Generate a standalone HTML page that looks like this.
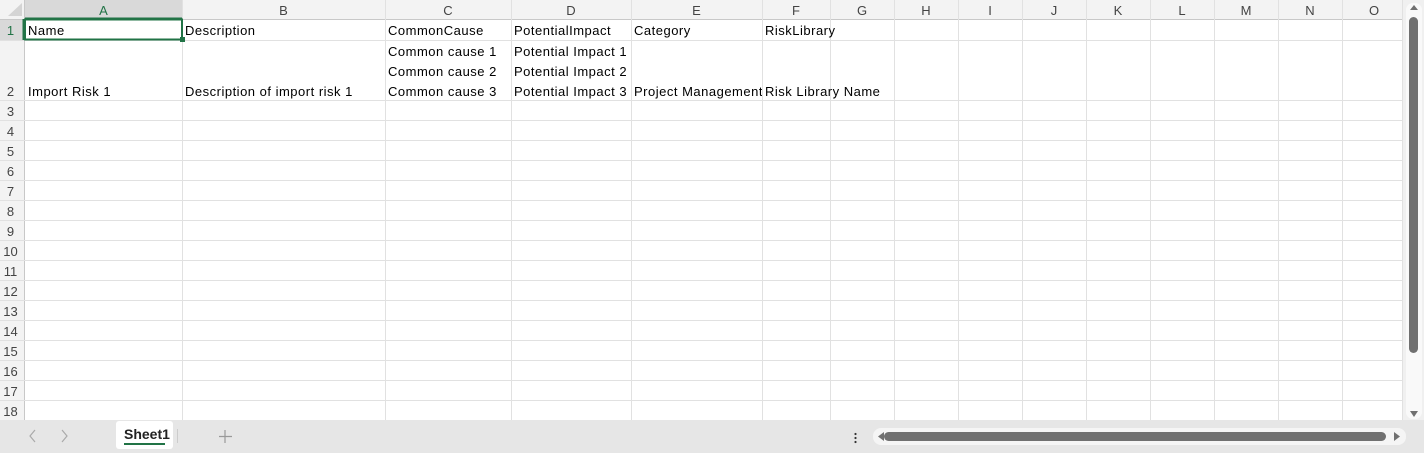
<!DOCTYPE html>
<html><head><meta charset="utf-8"><style>
body{margin:0;width:1424px;height:453px;overflow:hidden;background:#fff;font-family:"Liberation Sans",sans-serif;position:relative}
.t{position:absolute;font-size:13px;color:#000;white-space:nowrap;line-height:20px;letter-spacing:0.5px;margin-top:1px}
.h{position:absolute;font-size:13px;color:#444;text-align:center;line-height:19px;top:1px}
.r{position:absolute;left:0;width:21px;text-align:center;font-size:13px;color:#444;line-height:20px;margin-top:1px}
</style></head><body>
<svg width="1424" height="453" style="position:absolute;left:0;top:0">
<rect x="0" y="0" width="1404" height="19" fill="#f3f3f3"/>
<rect x="0" y="0" width="25" height="420" fill="#f3f3f3"/>
<rect x="25" y="0" width="157" height="19" fill="#d9d9d9"/>
<rect x="0" y="19" width="25" height="21" fill="#d9d9d9"/>
<polygon points="8,16 22,16 22,3" fill="#d4d4d4"/>
<g stroke="#e1e1e1" stroke-width="1">
<line x1="0" y1="19.5" x2="1404" y2="19.5" stroke="#c8c8c8"/>
<line x1="24.5" y1="0" x2="24.5" y2="420" stroke="#c8c8c8"/>
<line x1="0" y1="40.5" x2="1404" y2="40.5"/>
<line x1="0" y1="100.5" x2="1404" y2="100.5"/>
<line x1="0" y1="120.5" x2="1404" y2="120.5"/><line x1="0" y1="140.5" x2="1404" y2="140.5"/><line x1="0" y1="160.5" x2="1404" y2="160.5"/><line x1="0" y1="180.5" x2="1404" y2="180.5"/><line x1="0" y1="200.5" x2="1404" y2="200.5"/><line x1="0" y1="220.5" x2="1404" y2="220.5"/><line x1="0" y1="240.5" x2="1404" y2="240.5"/><line x1="0" y1="260.5" x2="1404" y2="260.5"/><line x1="0" y1="280.5" x2="1404" y2="280.5"/><line x1="0" y1="300.5" x2="1404" y2="300.5"/><line x1="0" y1="320.5" x2="1404" y2="320.5"/><line x1="0" y1="340.5" x2="1404" y2="340.5"/><line x1="0" y1="360.5" x2="1404" y2="360.5"/><line x1="0" y1="380.5" x2="1404" y2="380.5"/><line x1="0" y1="400.5" x2="1404" y2="400.5"/>
<line x1="182.5" y1="0" x2="182.5" y2="420"/><line x1="385.5" y1="0" x2="385.5" y2="420"/><line x1="511.5" y1="0" x2="511.5" y2="420"/><line x1="631.5" y1="0" x2="631.5" y2="420"/><line x1="762.5" y1="0" x2="762.5" y2="420"/><line x1="830.5" y1="0" x2="830.5" y2="420"/><line x1="894.5" y1="0" x2="894.5" y2="420"/><line x1="958.5" y1="0" x2="958.5" y2="420"/><line x1="1022.5" y1="0" x2="1022.5" y2="420"/><line x1="1086.5" y1="0" x2="1086.5" y2="420"/><line x1="1150.5" y1="0" x2="1150.5" y2="420"/><line x1="1214.5" y1="0" x2="1214.5" y2="420"/><line x1="1278.5" y1="0" x2="1278.5" y2="420"/><line x1="1342.5" y1="0" x2="1342.5" y2="420"/><line x1="1402.5" y1="0" x2="1402.5" y2="420"/>
</g>
<line x1="25" y1="18.5" x2="182" y2="18.5" stroke="#217346" stroke-width="2"/>
<line x1="23.5" y1="19" x2="23.5" y2="40" stroke="#217346" stroke-width="2"/>
<rect x="25" y="19.5" width="157" height="20" fill="none" stroke="#217346" stroke-width="2"/>
<rect x="180" y="37" width="5" height="5" fill="#217346"/>
<rect x="1403" y="0" width="21" height="420" fill="#f0f0f0"/>
<rect x="1406" y="3" width="16" height="416" rx="7" fill="#f9f9f9"/>
<polygon points="1410,10 1418,10 1414,5" fill="#707070"/>
<rect x="1409" y="17" width="9" height="336" rx="4.5" fill="#707070"/>
<polygon points="1410,411 1418,411 1414,417" fill="#707070"/>
<rect x="0" y="420" width="1424" height="33" fill="#e6e6e6"/>
<rect x="116" y="421" width="57" height="28" rx="3" fill="#fff"/>
<rect x="124" y="443" width="41" height="2" fill="#217346"/>
<line x1="177.5" y1="429" x2="177.5" y2="443" stroke="#ccc"/>
<path d="M35 430 L30 436 L35 442 M62 430 L67 436 L62 442" stroke="#aaa" fill="none" stroke-width="1.2"/>
<path d="M225 430 V443 M219 436.5 H232" stroke="#999" stroke-width="1.2"/>
<circle cx="855.5" cy="434" r="1.1" fill="#333"/><circle cx="855.5" cy="438" r="1.1" fill="#333"/><circle cx="855.5" cy="442" r="1.1" fill="#333"/>
<rect x="873" y="428" width="533" height="17" rx="8" fill="#f5f5f5"/>
<polygon points="878,436.5 884,432 884,441" fill="#707070"/>
<rect x="884" y="432" width="502" height="9" rx="4.5" fill="#707070"/>
<polygon points="1400,436.5 1394,432 1394,441" fill="#707070"/>
</svg>
<div class="h" style="left:25px;width:157px;color:#217346">A</div>
<div class="h" style="left:182px;width:203px">B</div>
<div class="h" style="left:385px;width:126px">C</div>
<div class="h" style="left:511px;width:120px">D</div>
<div class="h" style="left:631px;width:131px">E</div>
<div class="h" style="left:762px;width:68px">F</div>
<div class="h" style="left:830px;width:64px">G</div>
<div class="h" style="left:894px;width:64px">H</div>
<div class="h" style="left:958px;width:64px">I</div>
<div class="h" style="left:1022px;width:64px">J</div>
<div class="h" style="left:1086px;width:64px">K</div>
<div class="h" style="left:1150px;width:64px">L</div>
<div class="h" style="left:1214px;width:64px">M</div>
<div class="h" style="left:1278px;width:64px">N</div>
<div class="h" style="left:1342px;width:64px">O</div>
<div class="r" style="top:20px;color:#217346">1</div>
<div class="r" style="top:81px">2</div>
<div class="r" style="top:101px">3</div><div class="r" style="top:121px">4</div><div class="r" style="top:141px">5</div><div class="r" style="top:161px">6</div><div class="r" style="top:181px">7</div><div class="r" style="top:201px">8</div><div class="r" style="top:221px">9</div><div class="r" style="top:241px">10</div><div class="r" style="top:261px">11</div><div class="r" style="top:281px">12</div><div class="r" style="top:301px">13</div><div class="r" style="top:321px">14</div><div class="r" style="top:341px">15</div><div class="r" style="top:361px">16</div><div class="r" style="top:381px">17</div><div class="r" style="top:401px">18</div>
<div class="t" style="left:28px;top:20px">Name</div>
<div class="t" style="left:185px;top:20px">Description</div>
<div class="t" style="left:388px;top:20px">CommonCause</div>
<div class="t" style="left:514px;top:20px">PotentialImpact</div>
<div class="t" style="left:634px;top:20px">Category</div>
<div class="t" style="left:765px;top:20px">RiskLibrary</div>
<div class="t" style="left:28px;top:81px">Import Risk 1</div>
<div class="t" style="left:185px;top:81px">Description of import risk 1</div>
<div class="t" style="left:388px;top:41px">Common cause 1<br>Common cause 2<br>Common cause 3</div>
<div class="t" style="left:514px;top:41px">Potential Impact 1<br>Potential Impact 2<br>Potential Impact 3</div>
<div class="t" style="left:634px;top:81px;width:128px;overflow:hidden">Project Management</div>
<div class="t" style="left:765px;top:81px">Risk Library Name</div>
<div style="position:absolute;left:124px;top:426px;font-size:14px;font-weight:bold;color:#222">Sheet1</div>
</body></html>
